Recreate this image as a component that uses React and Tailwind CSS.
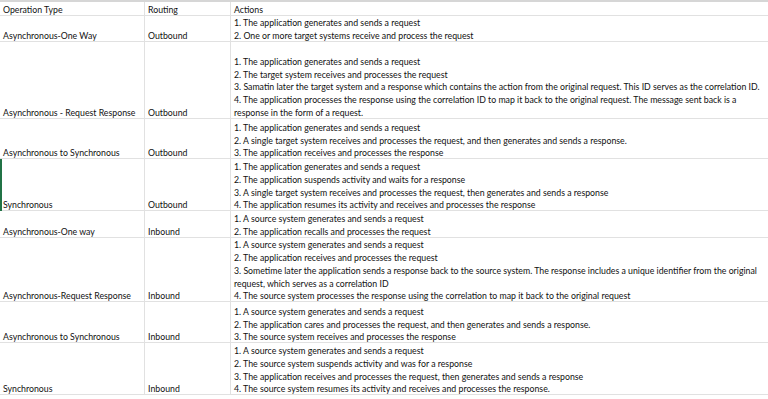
import React from 'react';

const rows = [
    {
        type: 'Asynchronous-One Way',
        routing: 'Outbound',
        h: 'h-[26px]',
        actions: [
            '1. The application generates and sends a request',
            '2. One or more target systems receive and process the request',
        ],
    },
    {
        type: 'Asynchronous - Request Response',
        routing: 'Outbound',
        h: 'h-[77px]',
        actions: [
            '',
            '1. The application generates and sends a request',
            '2. The target system receives and processes the request',
            '3. Samatin later the target system and a response which contains the action from the original request. This ID serves as the correlation ID.',
            '4. The application processes the response using the correlation ID to map it back to the original request. The message sent back is a',
            'response in the form of a request.',
        ],
    },
    {
        type: 'Asynchronous to Synchronous',
        routing: 'Outbound',
        h: 'h-[41px]',
        actions: [
            '1. The application generates and sends a request',
            '2. A single target system receives and processes the request, and then generates and sends a response.',
            '3. The application receives and processes the response',
        ],
    },
    {
        type: 'Synchronous',
        routing: 'Outbound',
        h: 'h-[52px]',
        selected: true,
        actions: [
            '1. The application generates and sends a request',
            '2. The application suspends activity and waits for a response',
            '3. A single target system receives and processes the request, then generates and sends a response',
            '4. The application resumes its activity and receives and processes the response',
        ],
    },
    {
        type: 'Asynchronous-One way',
        routing: 'Inbound',
        h: 'h-[26px]',
        actions: [
            '1. A source system generates and sends a request',
            '2. The application recalls and processes the request',
        ],
    },
    {
        type: 'Asynchronous-Request Response',
        routing: 'Inbound',
        h: 'h-[65px]',
        actions: [
            '1. A source system generates and sends a request',
            '2. The application receives and processes the request',
            '3. Sometime later the application sends a response back to the source system. The response includes a unique identifier from the original',
            'request, which serves as a correlation ID',
            '4. The source system processes the response using the correlation to map it back to the original request',
        ],
    },
    {
        type: 'Asynchronous to Synchronous',
        routing: 'Inbound',
        h: 'h-[41px]',
        actions: [
            '1. A source system generates and sends a request',
            '2. The application cares and processes the request, and then generates and sends a response.',
            '3. The source system receives and processes the response',
        ],
    },
    {
        type: 'Synchronous',
        routing: 'Inbound',
        h: 'h-[52px]',
        actions: [
            '1. A source system generates and sends a request',
            '2. The source system suspends activity and was for a response',
            '3. The application receives and processes the request, then generates and sends a response',
            '4. The source system resumes its activity and receives and processes the response.',
        ],
    },
];

function Cell({ children, last }) {
    return (
        <div className={`flex flex-col justify-end whitespace-nowrap border-b border-[#e1e1e1] px-[3px] ${last ? '' : 'border-r'}`}>
            <div className="translate-y-[2px]">{children}</div>
        </div>
    );
}

export default function App() {
    return (
        <div className="h-[399px] w-[768px] overflow-hidden bg-white font-['Lato','Liberation_Sans',sans-serif] text-[8.75px] leading-[12.75px] text-[#111]">
            <div className="h-[2px] bg-[#d6d6d6]" />
            <div className="grid h-[13px] grid-cols-[145px_86px_1fr]">
                <Cell>Operation Type</Cell>
                <Cell>Routing</Cell>
                <Cell last>Actions</Cell>
            </div>
            {rows.map((row, i) => (
                <div key={i} className={`relative grid grid-cols-[145px_86px_1fr] ${row.h}`}>
                    {row.selected && <div className="absolute left-0 top-0 h-full w-[2px] bg-[#217346]" />}
                    <Cell>{row.type}</Cell>
                    <Cell>{row.routing}</Cell>
                    <Cell last>
                        {row.actions.map((line, j) => (
                            <div key={j} className="h-[12.75px]">{line}</div>
                        ))}
                    </Cell>
                </div>
            ))}
        </div>
    );
}
